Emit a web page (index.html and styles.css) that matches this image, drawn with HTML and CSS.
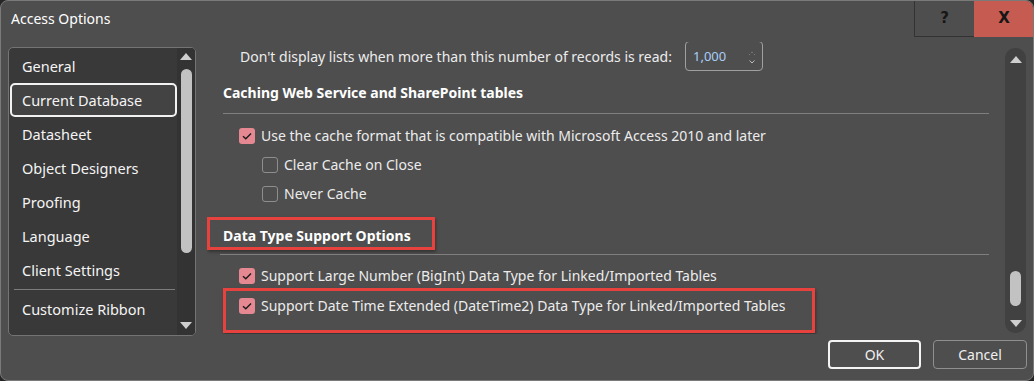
FILE: index.html
```html
<!DOCTYPE html>
<html lang="en">
<head>
    <meta charset="UTF-8">
    <title>Access Options</title>
    <link rel="stylesheet" href="styles.css">
</head>
<body>
    <div class="window">
        <div class="titlebar">
            <div class="title">Access Options</div>
            <div class="title-btn help">?</div>
            <div class="title-btn close">X</div>
        </div>

        <div class="main">
            <div class="nav">
                <ul class="nav-list">
                    <li class="nav-item">General</li>
                    <li class="nav-item selected">Current Database</li>
                    <li class="nav-item">Datasheet</li>
                    <li class="nav-item">Object Designers</li>
                    <li class="nav-item">Proofing</li>
                    <li class="nav-item">Language</li>
                    <li class="nav-item">Client Settings</li>
                    <li class="nav-sep"></li>
                    <li class="nav-item">Customize Ribbon</li>
                </ul>
                <div class="scrollbar nav-scroll">
                    <span class="arrow up"></span>
                    <div class="track"><div class="thumb"></div></div>
                    <span class="arrow down"></span>
                </div>
            </div>

            <div class="content">
                <div class="pane">
                    <div class="pane-inner">
                        <div class="row records">
                            <span>Don't display lists when more than this number of records is read:</span>
                            <div class="number-box">
                                <span class="number">1,000</span>
                                <span class="spin">
                                    <svg width="8" height="14" viewBox="0 0 8 14">
                                        <path d="M1 4 L1.6 3.4 M3.5 1.5 L4.5 1.5 M6.4 3.4 L7 4" stroke="#9a9a9a" stroke-width="1" fill="none"/>
                                        <path d="M1.5 9.5 L4 12 L6.5 9.5" stroke="#bdbdbd" stroke-width="1" fill="none"/>
                                    </svg>
                                </span>
                            </div>
                        </div>

                        <div class="heading">Caching Web Service and SharePoint tables</div>
                        <div class="rule"></div>

                        <div class="row option first">
                            <span class="check on"><svg width="16" height="16" viewBox="0 0 16 16"><path d="M4 8.2 L6.8 10.8 L12 5.4" stroke="#1b1b1b" stroke-width="1.4" fill="none"/></svg></span>
                            <span>Use the cache format that is compatible with Microsoft Access 2010 and later</span>
                        </div>
                        <div class="row option sub">
                            <span class="check"></span>
                            <span>Clear Cache on Close</span>
                        </div>
                        <div class="row option sub">
                            <span class="check"></span>
                            <span>Never Cache</span>
                        </div>

                        <div class="heading boxed">Data Type Support Options</div>
                        <div class="rule second"></div>

                        <div class="row option bigint">
                            <span class="check on"><svg width="16" height="16" viewBox="0 0 16 16"><path d="M4 8.2 L6.8 10.8 L12 5.4" stroke="#1b1b1b" stroke-width="1.4" fill="none"/></svg></span>
                            <span>Support Large Number (BigInt) Data Type for Linked/Imported Tables</span>
                        </div>
                        <div class="highlight">
                            <div class="row option">
                                <span class="check on"><svg width="16" height="16" viewBox="0 0 16 16"><path d="M4 8.2 L6.8 10.8 L12 5.4" stroke="#1b1b1b" stroke-width="1.4" fill="none"/></svg></span>
                                <span>Support Date Time Extended (DateTime2) Data Type for Linked/Imported Tables</span>
                            </div>
                        </div>
                    </div>
                </div>
                <div class="scrollbar content-scroll">
                    <span class="arrow up"></span>
                    <div class="track"><div class="thumb"></div></div>
                    <span class="arrow down"></span>
                </div>
            </div>
        </div>

        <div class="footer">
            <button class="btn default">OK</button>
            <button class="btn">Cancel</button>
        </div>
    </div>
</body>
</html>
```

FILE: styles.css
```css
* {
    box-sizing: border-box;
}

body {
    margin: 0;
    background: #262626;
    font-family: 'Noto Sans', 'Open Sans', sans-serif;
    font-size: 14px;
    color: #ececec;
}

.window {
    width: 1034px;
    height: 381px;
    background: #4e4e4e;
    border: 1px solid #7a7a7a;
    border-radius: 8px;
    overflow: hidden;
}

/* title bar */
.titlebar {
    display: flex;
    align-items: stretch;
    height: 36px;
}

.title {
    flex: 1;
    padding-left: 10px;
    line-height: 36px;
    font-size: 14px;
    color: #ffffff;
}

.title-btn {
    width: 60px;
    text-align: center;
    line-height: 36px;
    font-weight: bold;
    font-size: 15px;
    color: #161616;
    font-family: 'DejaVu Sans', sans-serif;
}

.help {
    border-left: 1px solid #333;
    border-bottom: 1px solid #333;
    margin-top: -1px;
    line-height: 37px;
}

.close {
    background: #c55b51;
    margin-top: -1px;
    margin-right: -1px;
    line-height: 37px;
    height: 37px;
}

/* main area */
.main {
    display: flex;
    align-items: flex-start;
    height: 299px;
    padding-left: 7px;
}

.nav {
    display: flex;
    margin-top: 10px;
    width: 188px;
    height: 289px;
    background: #393939;
    border: 1px solid #747474;
    border-radius: 5px;
    overflow: hidden;
}

.nav-list {
    list-style: none;
    margin: 0;
    padding: 1px 0 0 1px;
    flex: 1;
}

.nav-item {
    height: 34px;
    line-height: 30px;
    border: 2px solid transparent;
    border-radius: 5px;
    padding-left: 10px;
    font-size: 14.5px;
    color: #f4f4f4;
}

.nav-item.selected {
    border-color: #f2f2f2;
    background: #434343;
}

.nav-sep {
    height: 1px;
    margin: 2px 2px 2px 4px;
    background: #7c7c7c;
}

/* scrollbars */
.scrollbar {
    display: flex;
    flex-direction: column;
    align-items: center;
}

.nav-scroll {
    width: 18px;
    background: #333333;
    padding: 5px 0 6px;
}

.arrow {
    width: 0;
    height: 0;
    border-left: 6px solid transparent;
    border-right: 6px solid transparent;
}

.arrow.up {
    border-bottom: 7px solid #cfcfcf;
}

.arrow.down {
    border-top: 7px solid #cfcfcf;
}

.track {
    flex: 1;
    width: 100%;
    display: flex;
    flex-direction: column;
    align-items: center;
}

.thumb {
    width: 11px;
    background: #c2c2c2;
    border-radius: 6px;
}

.nav-scroll .track {
    padding-top: 9px;
}

.nav-scroll .thumb {
    height: 184px;
}

.content {
    flex: 1;
    display: flex;
    margin-top: 5px;
    margin-left: 11px;
    padding-right: 7px;
    height: 292px;
}

.pane {
    flex: 1;
    overflow: hidden;
    padding-right: 16px;
}

.pane-inner {
    margin-top: -6px;
}

.content-scroll {
    width: 21px;
    margin-top: 6px;
    height: 285px;
    background: #414141;
    border-radius: 10px;
    padding: 8px 0 6px;
}

.content-scroll .track {
    justify-content: flex-end;
    padding-bottom: 14px;
}

.content-scroll .thumb {
    height: 35px;
}

/* options */
.row {
    display: flex;
    align-items: center;
    height: 29px;
    white-space: nowrap;
}

.records {
    height: 40px;
    padding-left: 33px;
}

.number-box {
    display: flex;
    align-items: center;
    justify-content: space-between;
    margin-left: 13px;
    width: 78px;
    height: 30px;
    border: 1px solid #a0a0a0;
    border-radius: 4px;
    padding: 0 6px 0 7px;
}

.number {
    font-size: 13px;
    color: #a9cdf7;
}

.spin svg {
    display: block;
    margin-top: 4px;
}

.heading {
    height: 34px;
    line-height: 34px;
    padding-left: 16px;
    font-weight: bold;
    color: #ffffff;
}

.rule {
    height: 1px;
    margin: 3px 0 0 16px;
    background: #7f7f7f;
}

.rule.second {
    margin-top: 4px;
    margin-left: 13px;
}

.option {
    padding-left: 32px;
}

.option.first {
    margin-top: 7px;
}

.option.sub {
    padding-left: 55px;
}

.check {
    width: 16px;
    height: 16px;
    margin-right: 6px;
    border: 1px solid #8e8e8e;
    border-radius: 3px;
    flex-shrink: 0;
}

.check.on {
    border: none;
    background: #e68892;
}

.check svg {
    display: block;
}

.heading.boxed {
    margin-top: 9px;
    width: 228px;
    height: 33px;
    line-height: 27px;
    padding: 2px 0 0 13px;
    border: 3px solid #e8423f;
    box-shadow: 1px 2px 3px rgba(0, 0, 0, 0.35);
}

.option.bigint {
    margin-top: 6px;
}

.highlight {
    margin: -2px 0 0 16px;
    width: 592px;
    height: 45px;
    border: 3px solid #e8423f;
    box-shadow: 1px 2px 3px rgba(0, 0, 0, 0.35);
}

.highlight .option {
    padding-left: 13px;
}

/* footer buttons */
.footer {
    display: flex;
    justify-content: flex-end;
    gap: 12px;
    padding: 4px 6px 0 0;
}

.btn {
    height: 29px;
    width: 94px;
    background: #4e4e4e;
    border: 1px solid #8f8f8f;
    border-radius: 4px;
    font-family: 'Noto Sans', 'Open Sans', sans-serif;
    font-size: 14px;
    color: #f0f0f0;
}

.btn.default {
    width: 93px;
    border: 2px solid #f4f4f4;
}
```
